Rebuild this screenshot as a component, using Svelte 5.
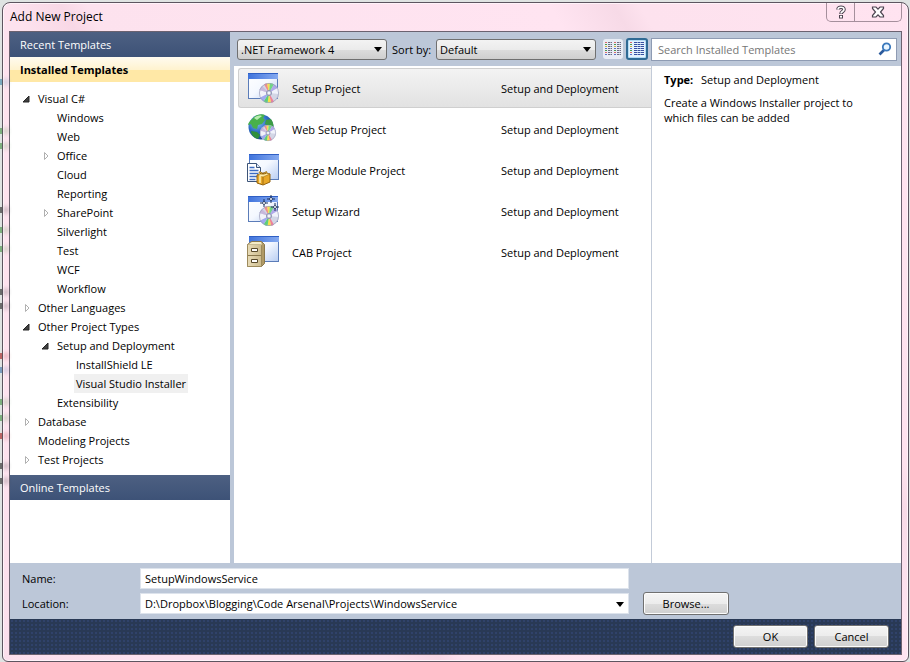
<script>
    let framework = $state('.NET Framework 4');
    let sort = $state('Default');
    let search = $state('');
    let name = $state('SetupWindowsService');
    let location = $state('D:\\Dropbox\\Blogging\\Code Arsenal\\Projects\\WindowsService');
    let largeIcons = $state(true);
    let selectedNode = $state('Visual Studio Installer');
    let selectedTemplate = $state('Setup Project');

    const nodes = [
        { text: 'Visual C#', level: 0, state: 'open' },
        { text: 'Windows', level: 1 },
        { text: 'Web', level: 1 },
        { text: 'Office', level: 1, state: 'closed' },
        { text: 'Cloud', level: 1 },
        { text: 'Reporting', level: 1 },
        { text: 'SharePoint', level: 1, state: 'closed' },
        { text: 'Silverlight', level: 1 },
        { text: 'Test', level: 1 },
        { text: 'WCF', level: 1 },
        { text: 'Workflow', level: 1 },
        { text: 'Other Languages', level: 0, state: 'closed' },
        { text: 'Other Project Types', level: 0, state: 'open' },
        { text: 'Setup and Deployment', level: 1, state: 'open' },
        { text: 'InstallShield LE', level: 2 },
        { text: 'Visual Studio Installer', level: 2 },
        { text: 'Extensibility', level: 1 },
        { text: 'Database', level: 0, state: 'closed' },
        { text: 'Modeling Projects', level: 0 },
        { text: 'Test Projects', level: 0, state: 'closed' }
    ];

    const templates = [
        { name: 'Setup Project', type: 'Setup and Deployment', icon: 'setup' },
        { name: 'Web Setup Project', type: 'Setup and Deployment', icon: 'web' },
        { name: 'Merge Module Project', type: 'Setup and Deployment', icon: 'merge' },
        { name: 'Setup Wizard', type: 'Setup and Deployment', icon: 'wizard' },
        { name: 'CAB Project', type: 'Setup and Deployment', icon: 'cab' }
    ];

    // ends of the code lines in the editor behind the dialog
    const codeEnds = [
        { top: 79, color: '#3a86a8' },
        { top: 128, color: '#3f8f3f' },
        { top: 143, color: '#3f8f3f' },
        { top: 207, color: '#222' },
        { top: 227, color: '#3f8f3f' },
        { top: 246, color: '#3f8f3f' },
        { top: 289, color: '#222' },
        { top: 303, color: '#222' },
        { top: 353, color: '#a31515' },
        { top: 367, color: '#3a6fa8' },
        { top: 399, color: '#3f8f3f' },
        { top: 415, color: '#3f8f3f' },
        { top: 433, color: '#a31515' },
        { top: 463, color: '#222' },
        { top: 478, color: '#222' }
    ];

    const lines = [0, 1, 2, 3, 4, 5, 6];
    const dotColors = ['#d86a6a', '#4a9a4a', '#d0b040', '#5a70c8', '#4a9a4a', '#d86a6a', '#5a70c8'];
</script>

{#snippet appWindow(x, y)}
    <rect x={x + 0.5} y={y + 0.5} width="29" height="25" fill="url(#pane)" stroke="#5b7cb8" />
    <rect x={x} y={y} width="30" height="6" fill="url(#bar)" />
    <path d="M{x} {y + 0.5}h30" stroke="#2f5fc4" />
{/snippet}

{#snippet disc(x, y, r)}
    <g transform="translate({x} {y}) scale({r / 10})">
        <circle r="10" fill="#d3d6e6" />
        <path d="M0 0L-5 -8.7A10 10 0 0 1 -2 -9.8z" fill="#f08c8c" />
        <path d="M0 0L-2 -9.8A10 10 0 0 1 1 -10z" fill="#f8e050" />
        <path d="M0 0L1 -10A10 10 0 0 1 5 -8.7z" fill="#70d884" />
        <path d="M0 0L5 -8.7A10 10 0 0 1 8.7 -5z" fill="#b0a8ea" />
        <path d="M0 0L8.7 -5A10 10 0 0 1 10 1z" fill="#f0f2fb" />
        <path d="M0 0L5 8.7A10 10 0 0 1 2 9.8z" fill="#f08098" />
        <path d="M0 0L2 9.8A10 10 0 0 1 -1.500 9.9z" fill="#f6de4c" />
        <path d="M0 0L-1.500 9.900A10 10 0 0 1 -5.500 8.400z" fill="#5cd078" />
        <path d="M0 0L-5.500 8.400A10 10 0 0 1 -9 4.400z" fill="#a0aaf0" />
        <path d="M0 0L-9 4.400A10 10 0 0 1 -9.600 -3z" fill="#f2f2fa" />
        <path d="M0 0L-9.600 -3A10 10 0 0 1 -7 -7z" fill="#c8b8dc" />
        <circle r="9.600" fill="none" stroke="#9a9ebc" stroke-width="0.700" />
        <circle r="2.600" fill="#c9cde0" stroke="#8388a8" stroke-width="0.800" />
        <circle r="1.100" fill="#fff" />
    </g>
{/snippet}

{#snippet star(x, y)}
    <path d="M{x} {y - 4}v8M{x - 4} {y}h8" stroke="#1d3158" />
    <path d="M{x} {y - 2}l2 2-2 2-2-2z" fill="#1d3158" />
    <circle cx={x} cy={y} r="1" fill="#fff" />
{/snippet}

<svg class="defs" width="0" height="0" aria-hidden="true">
    <defs>
        <linearGradient id="bar" x1="0" x2="1">
            <stop offset="0" stop-color="#3f73dc" />
            <stop offset="1" stop-color="#86aaf0" />
        </linearGradient>
        <linearGradient id="pane" x1="0" y1="0" x2="1" y2="1">
            <stop offset="0" stop-color="#ffffff" />
            <stop offset="0.500" stop-color="#f4f8ff" />
            <stop offset="1" stop-color="#b8cdf2" />
        </linearGradient>
        <radialGradient id="sea" cx="0.350" cy="0.300" r="0.800">
            <stop offset="0" stop-color="#8cc4f4" />
            <stop offset="0.500" stop-color="#2d6cc4" />
            <stop offset="1" stop-color="#143c84" />
        </radialGradient>
        <linearGradient id="cabinet" x1="0" x2="1">
            <stop offset="0" stop-color="#e8dcb8" />
            <stop offset="1" stop-color="#cdbc8e" />
        </linearGradient>
    </defs>
</svg>

<div class="desktop">
    <div class="window">
        <header class="titlebar">
            <h1>Add New Project</h1>
            <div class="caption-buttons">
                <button aria-label="Help">
                    <svg width="12" height="14" viewBox="0 0 12 14" fill="none">
                        <path d="M3 4.500C3 1.500 9 1.500 9 4.500C9 6.500 6 6.500 6 9" stroke="#4c4450" stroke-width="3.600" />
                        <rect x="4" y="10" width="4" height="3.500" fill="#4c4450" />
                        <path d="M3 4.500C3 1.500 9 1.500 9 4.500C9 6.500 6 6.500 6 8.500" stroke="#fff" stroke-width="1.600" />
                        <rect x="5" y="10.800" width="2" height="1.800" fill="#fff" />
                    </svg>
                </button>
                <button aria-label="Close">
                    <svg width="14" height="12" viewBox="0 0 14 12">
                        <path d="M1.500 1h3.500L7 3.200 9 1h3.500v1.500L9.500 6l3 3.500V11H9L7 8.800 5 11H1.500V9.500l3-3.500-3-3.500z" fill="#fff" stroke="#4c4450" stroke-width="1.200" />
                    </svg>
                </button>
            </div>
        </header>

        <div class="client">
            <div class="main">
                <nav class="sidebar">
                    <button class="section">Recent Templates</button>
                    <button class="section active">Installed Templates</button>
                    <ul class="tree">
                        {#each nodes as node}
                            <li class="level{node.level}">
                                <span class="arrow">
                                    {#if node.state == 'open'}
                                        <svg width="8" height="8" viewBox="0 0 8 8"><path d="M7 1v6H1z" fill="#404040" stroke="#262626" /></svg>
                                    {:else if node.state == 'closed'}
                                        <svg width="8" height="8" viewBox="0 0 8 8"><path d="M3.500 0.500v7L7 4z" fill="#fff" stroke="#b0b0b0" /></svg>
                                    {/if}
                                </span>
                                <button class:selected={selectedNode == node.text} onclick={() => selectedNode = node.text}>{node.text}</button>
                            </li>
                        {/each}
                    </ul>
                    <button class="section">Online Templates</button>
                </nav>

                <div class="content">
                    <div class="toolbar">
                        <div class="combo framework">
                            <select aria-label="Framework" bind:value={framework}>
                                <option>.NET Framework 4</option>
                            </select>
                        </div>
                        <label for="sort">Sort by:</label>
                        <div class="combo sort">
                            <select id="sort" bind:value={sort}>
                                <option>Default</option>
                            </select>
                        </div>
                        <div class="views">
                            <button class:pressed={!largeIcons} aria-label="Small Icons" onclick={() => largeIcons = false}>
                                <svg width="16" height="16" viewBox="0 0 16 16">
                                    {#each lines as i}
                                        <path d="M0 {i * 2 + 1.5}h2M9 {i * 2 + 1.5}h2" stroke={dotColors[i]} />
                                        <path d="M3 {i * 2 + 1.5}h4M12 {i * 2 + 1.5}h4" stroke="#6c6c84" stroke-dasharray="2 0.500" />
                                    {/each}
                                </svg>
                            </button>
                            <button class:pressed={largeIcons} aria-label="Medium Icons" onclick={() => largeIcons = true}>
                                <svg width="16" height="16" viewBox="0 0 16 16">
                                    <rect width="16" height="16" fill="#e4f3fd" />
                                    {#each lines as i}
                                        <path d="M1 {i * 2 + 1.5}h2" stroke={dotColors[i]} />
                                        <path d="M5 {i * 2 + 1.5}h10" stroke="#3550a0" stroke-dasharray="3 0.500" />
                                    {/each}
                                </svg>
                            </button>
                        </div>
                    </div>
                    <div class="search">
                        <input type="text" aria-label="Search" placeholder="Search Installed Templates" bind:value={search}>
                        <svg width="14" height="14" viewBox="0 0 14 14" fill="none">
                            <path d="M1.500 12.500L6 8" stroke="#2b5a9c" stroke-width="2.600" />
                            <circle cx="8.500" cy="5" r="3.700" fill="#eaf6ff" stroke="#3a78bc" stroke-width="1.800" />
                        </svg>
                    </div>

                    <ul class="templates">
                        {#each templates as t}
                            <li>
                                <button class:selected={selectedTemplate == t.name} onclick={() => selectedTemplate = t.name}>
                                    <svg width="34" height="34" viewBox="0 0 34 34">
                                        {#if t.icon == 'setup'}
                                            {@render appWindow(1, 2)}
                                            {@render disc(22, 22, 10)}
                                        {:else if t.icon == 'web'}
                                            <circle cx="14" cy="15" r="12.500" fill="url(#sea)" />
                                            <path d="M5 7c3-4 9-6 13-4l-2 3 2 2-3 4-4 1-1 4-4-1-2-4-3 1c0-2 2-4 4-6z" fill="#48b04c" />
                                            <path d="M19 8l5-1c2 3 3 6 2 9l-4-2-4-2z" fill="#3c9c44" />
                                            <path d="M4 19l6 1 3 3-2 4c-4-1-7-4-7-8z" fill="#2f8f3c" />
                                            <path d="M7 6c2-2 5-3 8-2l-5 4z" fill="#b8ecb0" />
                                            {@render disc(21, 21, 8)}
                                        {:else if t.icon == 'merge'}
                                            {@render appWindow(2, 1)}
                                            <path d="M0.500 10.500h9l4 4v14h-13z" fill="#fff" stroke="#3c5478" />
                                            <path d="M9.500 10.500v4h4" fill="#dce6f6" stroke="#3c5478" />
                                            <path d="M2.500 14.500h5M2.500 17.500h9M2.500 20.500h9M2.500 23.500h9M2.500 26.500h6" stroke="#3c6cc4" stroke-width="1.500" />
                                            <path d="M10 22l6-2 7 1v8l-7 3-6-2z" fill="#e8a828" stroke="#946410" />
                                            <path d="M10 22l6 2 7-3-7-1z" fill="#fbe08a" stroke="#946410" stroke-width="0.500" />
                                            <path d="M16 24v8" stroke="#a06c10" />
                                            <path d="M13 30v-7l7-2.500" stroke="#fff0b0" stroke-width="1.500" fill="none" />
                                            <path d="M16 21c-4-5-6 0 0 0s5-5 0 0z" fill="#f8cc50" stroke="#946410" />
                                        {:else if t.icon == 'wizard'}
                                            {@render appWindow(1, 2)}
                                            {@render disc(22, 22, 10)}
                                            {@render star(17, 9)}
                                            {@render star(24, 5)}
                                            {@render star(28, 13)}
                                        {:else}
                                            {@render appWindow(2, 1)}
                                            <path d="M0.500 9.500l4-3h10l3 3v19l-3 3h-14z" fill="#b09a66" stroke="#8a784c" />
                                            <rect x="0.500" y="9.500" width="14" height="22" rx="1" fill="url(#cabinet)" stroke="#9c8a5c" />
                                            <path d="M1 9.500l4-2.500h9l1 2.500z" fill="#f4ecc8" />
                                            <path d="M1 20.500h13" stroke="#8a784c" />
                                            <path d="M4.500 13.500h6v3h-6zM4.500 24.500h6v3h-6z" fill="#fff" stroke="#57492a" />
                                        {/if}
                                    </svg>
                                    <span class="name">{t.name}</span>
                                    <span class="type">{t.type}</span>
                                </button>
                            </li>
                        {/each}
                    </ul>

                    <section class="details">
                        <p><b>Type:</b> Setup and Deployment</p>
                        <p>Create a Windows Installer project to which files can be added</p>
                    </section>
                </div>
            </div>

            <div class="form">
                <label for="name">Name:</label>
                <input id="name" type="text" bind:value={name}>
                <label for="location">Location:</label>
                <div class="combo location">
                    <select id="location" bind:value={location}>
                        <option>D:\Dropbox\Blogging\Code Arsenal\Projects\WindowsService</option>
                    </select>
                </div>
                <button class="push">Browse...</button>
            </div>

            <footer>
                <button class="push">OK</button>
                <button class="push">Cancel</button>
            </footer>
        </div>
    </div>

    <!-- the glass frame blurs what lies behind it -->
    {#each codeEnds as c}
        <i class="code" style="top: {c.top}px; background: {c.color}"></i>
        <i class="code blurred" style="top: {c.top}px; background: {c.color}"></i>
    {/each}
</div>

<style>
    :global(body) {
        background-color: #dfe3e2;
    }

    .desktop, button, input, select {
        font-family: 'Segoe UI', 'Open Sans', 'Noto Sans', sans-serif;
        font-size: 11px;
        color: #000;
    }

    .desktop {
        position: relative;
        display: flex;
        min-height: 100vh;
        box-sizing: border-box;
        padding: 2px 1px 0 2px;
    }

    .defs {
        position: absolute;
    }

    .code {
        position: absolute;
        left: 0;
        width: 2px;
        height: 6px;
        opacity: 0.6;
    }

    .code.blurred {
        left: 4px;
        width: 4px;
        opacity: 0.3;
        filter: blur(2px);
    }

    h1, p, ul {
        margin: 0;
        padding: 0;
        list-style: none;
    }

    button {
        padding: 0;
        border: none;
        background: none;
        text-align: left;
    }

    .window {
        flex: 1;
        display: flex;
        flex-direction: column;
        padding: 0 6px 6px;
        border: 1px solid #5d5560;
        border-radius: 8px 8px 6px 6px;
        background: linear-gradient(60deg, #fbdfec 0, #fde2ee 10%, #fde2ee 30%, #f8d8e6 34%, #fde2ee 36%, #ffe4f1 72%, #f7dae7 77%, #fde2ee 79%, #ffe3f0 100%);
        box-shadow: inset 0 0 0 1px #fff3f9;
    }

    .titlebar {
        display: flex;
        justify-content: space-between;
        align-items: flex-start;
        height: 28px;
    }

    h1 {
        padding-left: 1px;
        font-size: 12px;
        font-weight: normal;
        line-height: 28px;
    }

    .caption-buttons {
        display: flex;
        border: 1px solid #a58f9c;
        border-top: none;
        border-radius: 0 0 5px 5px;
    }

    .caption-buttons button {
        display: flex;
        align-items: center;
        justify-content: center;
        width: 46px;
        height: 18px;
    }

    .caption-buttons button:first-child {
        width: 28px;
        border-right: 1px solid #a58f9c;
    }

    .client {
        flex: 1;
        display: flex;
        flex-direction: column;
        border: 1px solid #6b6270;
        background: #bcc7d8;
    }

    .main {
        flex: 1;
        display: flex;
        gap: 4px;
    }

    .sidebar {
        width: 220px;
        background: #fff;
    }

    .section {
        display: block;
        width: 100%;
        height: 25px;
        padding-left: 10px;
        background: linear-gradient(#4d6082, #3d5277);
        color: #fff;
    }

    .section.active {
        background: linear-gradient(#fffbf0 0, #fff3cf 50%, #ffe8a6 50%, #ffe8a6 100%);
        color: #000;
        font-weight: bold;
    }

    .tree {
        padding: 7px 0 6px 10px;
    }

    .tree li {
        display: flex;
        align-items: center;
        height: 19px;
    }

    .tree .level1 {
        padding-left: 19px;
    }

    .tree .level2 {
        padding-left: 38px;
    }

    .arrow {
        display: flex;
        justify-content: center;
        width: 16px;
    }

    .arrow svg {
        margin-right: 4px;
    }

    .tree button {
        height: 19px;
        padding: 0 2px;
    }

    .tree button.selected {
        background: #f0f0f0;
    }

    .content {
        flex: 1;
        display: grid;
        grid-template-columns: 1fr 250px;
        grid-template-rows: 34px 1fr;
    }

    .toolbar {
        display: flex;
        align-items: center;
        gap: 5px;
        padding-left: 3px;
        white-space: nowrap;
    }

    .combo {
        position: relative;
        display: flex;
    }

    .combo::after {
        content: '';
        position: absolute;
        right: 5px;
        top: 50%;
        margin-top: -2px;
        border: 4px solid transparent;
        border-top: 5px solid #000;
        border-bottom: none;
        pointer-events: none;
    }

    select {
        appearance: none;
        width: 100%;
        height: 21px;
        padding: 0 3px;
        border: 1px solid #707070;
        border-radius: 3px;
        background: linear-gradient(#f3f3f3 0, #ebebeb 50%, #dddddd 50%, #cfcfcf 100%);
    }

    .framework {
        width: 150px;
    }

    .sort {
        width: 160px;
    }

    .views {
        display: flex;
        align-items: center;
        gap: 3px;
        padding-left: 2px;
    }

    .views button {
        display: flex;
        align-items: center;
        justify-content: center;
        width: 20px;
        height: 20px;
        box-sizing: border-box;
        border-radius: 3px;
        background: #e9edf5;
    }

    .views button.pressed {
        width: 22px;
        height: 22px;
        border: 2px solid #2f6a94;
        background: #b5dcf5;
    }

    .search {
        display: flex;
        align-items: center;
        align-self: center;
        height: 21px;
        margin-right: 4px;
        padding-right: 4px;
        border: 1px solid #8e9bb3;
        background: #fff;
    }

    .search input {
        flex: 1;
        min-width: 0;
        padding: 0 6px;
        border: none;
        outline: none;
        background: none;
    }

    .search input::placeholder {
        color: #767676;
    }

    .templates {
        display: flex;
        flex-direction: column;
        gap: 1px;
        padding: 2px 0 0 4px;
        background: #fff;
    }

    .templates button {
        display: flex;
        align-items: center;
        width: 100%;
        height: 40px;
        box-sizing: border-box;
        padding-left: 8px;
        border: 1px solid transparent;
        border-right: none;
        border-radius: 3px 0 0 3px;
    }

    .templates button.selected {
        border-color: #cfcfcf;
        background: linear-gradient(#f3f3f3, #e2e2e2);
    }

    .templates .name {
        flex: 1;
        padding-left: 11px;
    }

    .templates .type {
        width: 150px;
    }

    .details {
        padding: 6px 30px 6px 12px;
        border-left: 1px solid #c3cbd8;
        background: #fff;
        line-height: 15px;
    }

    .details p {
        margin-bottom: 8px;
    }

    .details b {
        margin-right: 5px;
    }

    .form {
        display: grid;
        grid-template-columns: 118px minmax(0, 489px) 100px;
        grid-auto-rows: 21px;
        gap: 4px 0;
        align-items: center;
        padding: 5px 12px;
    }

    .form label {
        grid-column: 1;
    }

    .form input {
        height: 21px;
        box-sizing: border-box;
        padding: 0 4px;
        border: 1px solid #dde3ec;
        background: #fff;
    }

    .location select {
        padding: 0 4px;
        border-color: #dde3ec;
        border-radius: 0;
        background: #fff;
    }

    .push {
        width: 75px;
        height: 23px;
        border: 1px solid #707070;
        border-radius: 3px;
        background: linear-gradient(#f4f4f4 0, #ececec 50%, #dddddd 50%, #cfcfcf 100%);
        box-shadow: inset 0 0 0 1px #fcfcfc;
        text-align: center;
    }

    .form .push {
        width: 86px;
        margin-left: 14px;
    }

    footer {
        display: flex;
        justify-content: flex-end;
        align-items: center;
        gap: 6px;
        height: 35px;
        padding-right: 12px;
        background-color: #293955;
        background-image: radial-gradient(#30426a 1px, transparent 1px);
        background-size: 4px 4px;
    }
</style>
